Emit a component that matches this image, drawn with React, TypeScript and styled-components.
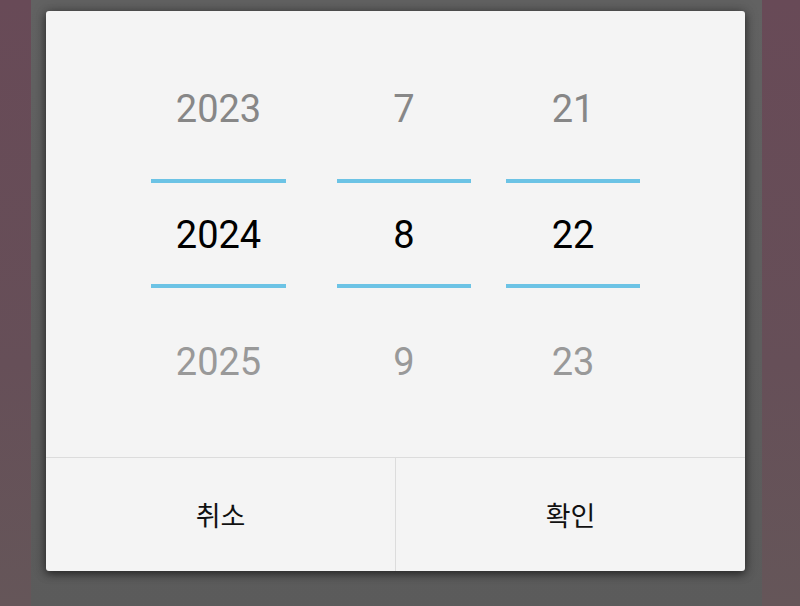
import * as React from "react";
import styled, { createGlobalStyle } from "styled-components";

const GlobalStyle = createGlobalStyle`
  html, body {
    margin: 0;
    padding: 0;
    width: 800px;
    height: 606px;
    overflow: hidden;
  }
`;

type Wheel = { prev: number; value: number; next: number; offset: number; width: number };

const wheels: Wheel[] = [
  { prev: 2023, value: 2024, next: 2025, offset: 0, width: 135 },
  { prev: 7, value: 8, next: 9, offset: 51, width: 134 },
  { prev: 21, value: 22, next: 23, offset: 35, width: 134 },
];

export default function App() {
  return (
    <>
      <GlobalStyle />
      <Screen>
        <Edge />
        <Backdrop>
          <Dialog>
            <Picker>
              {wheels.map((w) => (
                <WheelColumn key={w.value} $offset={w.offset} $width={w.width}>
                  <Item $height={124} $tone="prev">
                    {w.prev}
                  </Item>
                  <Spacer />
                  <SelectLine />
                  <Item $height={101} $tone="current" $nudge={3}>
                    {w.value}
                  </Item>
                  <SelectLine />
                  <Item $height={148} $tone="next">
                    {w.next}
                  </Item>
                </WheelColumn>
              ))}
            </Picker>
            <Footer>
              <ActionButton>취소</ActionButton>
              <ActionButton $divider>확인</ActionButton>
            </Footer>
          </Dialog>
        </Backdrop>
        <Edge $wide />
      </Screen>
    </>
  );
}

const Screen = styled.div`
  display: flex;
  width: 800px;
  height: 606px;
  background: #5c5c5c;
`;

const Edge = styled.div<{ $wide?: boolean }>`
  width: ${({ $wide }) => ($wide ? "38px" : "31px")};
  flex-shrink: 0;
  background: linear-gradient(180deg, #684a57 0%, #664f58 60%, #655659 100%);
`;

const Backdrop = styled.div`
  flex: 1;
  padding: 11px 0 0 15px;
  background: linear-gradient(180deg, #626262 0%, #5b5b5b 100%);
`;

const Dialog = styled.div`
  position: relative;
  width: 699px;
  height: 560px;
  display: flex;
  flex-direction: column;
  background: #f4f4f4;
  border-radius: 3px;
  box-shadow: 0 3px 8px rgba(0, 0, 0, 0.5), 0 0 14px rgba(0, 0, 0, 0.25);

  &::after {
    content: "";
    position: absolute;
    left: 337px;
    right: 10px;
    bottom: -13px;
    height: 9px;
    background: rgba(0, 0, 0, 0.28);
    filter: blur(2px);
    z-index: -1;
  }
`;

const Picker = styled.div`
  height: 446px;
  display: flex;
  padding: 36px 0 0 105px;
  box-sizing: border-box;
`;

const WheelColumn = styled.div<{ $offset: number; $width: number }>`
  width: ${({ $width }) => $width}px;
  margin-left: ${({ $offset }) => $offset}px;
  display: flex;
  flex-direction: column;
`;

const toneColor = {
  prev: "#878787",
  current: "#000000",
  next: "#999999",
};

const Item = styled.div<{
  $height: number;
  $tone: keyof typeof toneColor;
  $nudge?: number;
}>`
  height: ${({ $height }) => $height}px;
  box-sizing: border-box;
  padding-top: ${({ $nudge }) => $nudge ?? 0}px;
  display: flex;
  align-items: center;
  justify-content: center;
  font-family: Roboto, "Liberation Sans", sans-serif;
  font-size: 38px;
  color: ${({ $tone }) => toneColor[$tone]};
`;

const Spacer = styled.div`
  height: 8px;
`;

const SelectLine = styled.div`
  height: 4px;
  background: #6cc3e5;
`;

const Footer = styled.div`
  flex: 1;
  display: flex;
  border-top: 1px solid #dcdcdc;
`;

const ActionButton = styled.div<{ $divider?: boolean }>`
  flex: 1;
  display: flex;
  align-items: center;
  justify-content: center;
  border-left: ${({ $divider }) => ($divider ? "1px solid #dcdcdc" : "none")};
  font-family: "Noto Sans CJK KR", "Noto Sans", sans-serif;
  font-size: 27px;
  color: #111;
`;
